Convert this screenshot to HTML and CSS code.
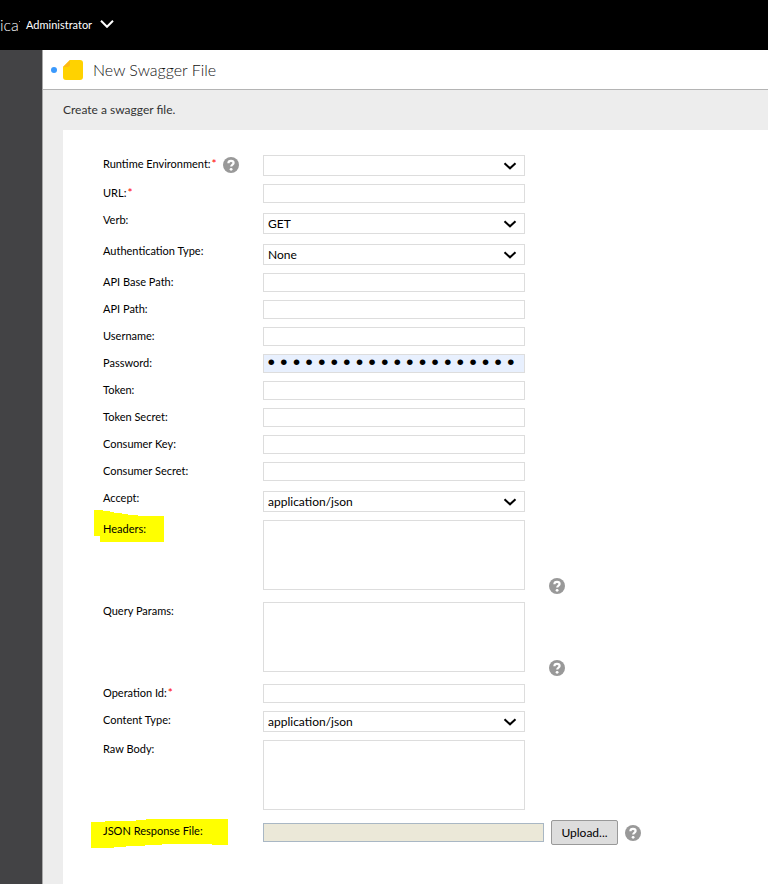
FILE: index.html
```html
<!DOCTYPE html>
<html lang="en">
<head>
<meta charset="utf-8">
<title>New Swagger File</title>
<link rel="stylesheet" href="styles.css">
</head>
<body>
<svg class="defs" aria-hidden="true">
  <symbol id="chevron" viewBox="0 0 14 8"><path d="M1.5 1.2 7 6.3 12.5 1.2" fill="none" stroke="currentColor" stroke-width="2"/></symbol>
  <symbol id="help" viewBox="0 0 16 16"><circle cx="8" cy="8" r="8" fill="#999"/><path d="M5.4 6.2C5.4 4.5 6.5 3.9 8 3.9s2.6.7 2.6 2c0 1.7-2.4 1.6-2.4 3.7" fill="none" stroke="#fff" stroke-width="2.2"/><circle cx="8.1" cy="12.3" r="1.4" fill="#fff"/></symbol>
</svg>
<header class="topbar">
  <span class="brand">ica</span><span class="dot-mark"></span>
  <button class="app-menu" type="button">Administrator <svg class="menu-chevron" viewBox="0 0 14 8"><path d="M1 .8 7 6.8 13 .8" fill="none" stroke="currentColor" stroke-width="2"/></svg></button>
</header>
<div class="shell">
  <nav class="rail" aria-label="Main"></nav>
  <main class="content">
    <div class="title-bar">
      <span class="unsaved"></span>
      <svg class="file-icon" viewBox="0 0 20 20" aria-hidden="true"><path d="M7 0H17a3 3 0 0 1 3 3V17a3 3 0 0 1-3 3H3a3 3 0 0 1-3-3V7Z" fill="#ffd200"/><path d="M7 0V4a3 3 0 0 1-3 3H0Z" fill="#fdb913"/></svg>
      <h1>New Swagger File</h1>
    </div>
    <p class="intro">Create a swagger file.</p>
    <form class="panel">
      <div class="row">
        <div class="label"><label for="runtime">Runtime Environment:<span class="req">*</span></label><svg class="help label-help"><use href="#help"/></svg></div>
        <div class="select"><select id="runtime"><option></option></select><svg class="chevron"><use href="#chevron"/></svg></div>
      </div>
      <div class="row"><div class="label"><label for="url">URL:<span class="req">*</span></label></div><input class="field" id="url" type="text"></div>
      <div class="row">
        <div class="label"><label for="verb">Verb:</label></div>
        <div class="select lowered"><select id="verb"><option>GET</option></select><svg class="chevron"><use href="#chevron"/></svg></div>
      </div>
      <div class="row">
        <div class="label"><label for="auth">Authentication Type:</label></div>
        <div class="select lowered"><select id="auth"><option>None</option></select><svg class="chevron"><use href="#chevron"/></svg></div>
      </div>
      <div class="row"><div class="label"><label for="base">API Base Path:</label></div><input class="field" id="base" type="text"></div>
      <div class="row"><div class="label"><label for="path">API Path:</label></div><input class="field" id="path" type="text"></div>
      <div class="row"><div class="label"><label for="user">Username:</label></div><input class="field" id="user" type="text"></div>
      <div class="row"><div class="label"><label for="pass">Password:</label></div><input class="field filled" id="pass" type="password" value="xxxxxxxxxxxxxxxxxxxx"></div>
      <div class="row"><div class="label"><label for="token">Token:</label></div><input class="field" id="token" type="text"></div>
      <div class="row"><div class="label"><label for="tsecret">Token Secret:</label></div><input class="field" id="tsecret" type="text"></div>
      <div class="row"><div class="label"><label for="ckey">Consumer Key:</label></div><input class="field" id="ckey" type="text"></div>
      <div class="row"><div class="label"><label for="csecret">Consumer Secret:</label></div><input class="field" id="csecret" type="text"></div>
      <div class="row">
        <div class="label"><label for="accept">Accept:</label></div>
        <div class="select lowered"><select id="accept"><option>application/json</option></select><svg class="chevron"><use href="#chevron"/></svg></div>
      </div>
      <div class="row tall">
        <div class="label"><svg class="mark mark-headers" viewBox="0 0 70 32" aria-hidden="true"><path d="M0 0H9V1H16V2H20V3H28V4H34V5H44V6H70V32H6V26H0Z" fill="#ff0"/></svg><label for="headers">Headers:</label></div>
        <textarea id="headers"></textarea><svg class="help area-help"><use href="#help"/></svg>
      </div>
      <div class="row tall">
        <div class="label"><label for="query">Query Params:</label></div>
        <textarea id="query"></textarea><svg class="help area-help"><use href="#help"/></svg>
      </div>
      <div class="row"><div class="label"><label for="opid">Operation Id:<span class="req">*</span></label></div><input class="field" id="opid" type="text"></div>
      <div class="row">
        <div class="label"><label for="ctype">Content Type:</label></div>
        <div class="select"><select id="ctype"><option>application/json</option></select><svg class="chevron"><use href="#chevron"/></svg></div>
      </div>
      <div class="row tall">
        <div class="label"><label for="raw">Raw Body:</label></div>
        <textarea id="raw"></textarea>
      </div>
      <div class="row">
        <div class="label"><svg class="mark mark-file" viewBox="0 0 137 29" aria-hidden="true"><path d="M0 3H14V2H45V1H55V0H137V26H121V25H71V26H54V27H35V28H23V29H0Z" fill="#ff0"/></svg><label for="jsonfile">JSON Response File:</label></div>
        <div class="upload"><input class="file-name" id="jsonfile" type="text" readonly><button class="upload-button" type="button">Upload...</button><svg class="help"><use href="#help"/></svg></div>
      </div>
    </form>
  </main>
</div>
</body>
</html>
```
FILE: styles.css
```css
* { box-sizing: border-box; }
body {
  margin: 0;
  min-height: 100vh;
  display: flex;
  flex-direction: column;
  font: 12px/18px Lato, "Liberation Sans", sans-serif;
  color: #000;
  background: #ededed;
}
.defs { position: absolute; width: 0; height: 0; }
input, select, textarea, button { font: inherit; color: inherit; margin: 0; border-radius: 0; }
.topbar {
  display: flex;
  align-items: center;
  height: 50px;
  background: #000;
  color: #fff;
}
.brand { width: 19px; font-size: 16px; line-height: 20px; font-weight: 300; }
.dot-mark { width: 1px; height: 1px; margin-bottom: 8px; background: #999; }
.app-menu {
  display: flex;
  align-items: center;
  gap: 8px;
  padding: 0 6px;
  border: 0;
  background: none;
  font-size: 11px;
}
.menu-chevron { width: 14px; height: 8px; margin-bottom: 2px; }
.shell { flex: 1; display: flex; }
.rail { width: 43px; flex: none; background: #434345; border-right: 1px solid #a8a8a8; }
.content { flex: 1; min-width: 0; display: flex; flex-direction: column; }
.title-bar {
  display: flex;
  align-items: center;
  height: 40px;
  padding-left: 8px;
  background: #fff;
  border-bottom: 1px solid #b4b4b4;
}
.unsaved { width: 6px; height: 6px; border-radius: 50%; background: #3b99fc; }
.file-icon { width: 20px; height: 20px; margin: 0 10px 0 6px; }
h1 { margin: 0; font-size: 16px; line-height: 20px; font-weight: 300; color: #111; }
.intro { margin: 0; padding: 11px 20px; color: #333; }
.panel { flex: 1; margin-left: 20px; padding: 25px 20px 20px 40px; background: #fff; }
.row { display: flex; align-items: flex-start; margin-bottom: 8px; }
.tall { margin-bottom: 12px; }
.label { position: relative; display: flex; width: 160px; flex: none; font-size: 11px; }
.label label { position: relative; white-space: nowrap; }
.req { margin-left: 1px; font-size: 12px; line-height: 12px; color: #f00; }
.help { width: 16px; height: 16px; flex: none; }
.label-help { position: absolute; left: 120px; top: 2px; }
.field, .select, textarea { width: 262px; border: 1px solid #ddd; background: #fff; }
.field { height: 19px; padding: 0 4px; }
.filled {
  padding: 0 1px;
  background: #e8f0fe;
  font-family: "Liberation Mono", monospace;
  font-size: 21px;
}
.select { position: relative; height: 21px; }
.lowered { margin-top: 2px; }
select {
  display: block;
  width: 100%;
  height: 19px;
  padding: 0 24px 0 4px;
  border: 0;
  background: none;
  appearance: none;
}
.chevron { position: absolute; right: 7px; top: 6px; width: 14px; height: 8px; pointer-events: none; }
textarea { display: block; height: 70px; resize: none; }
.area-help { align-self: flex-end; margin: 0 0 -4px 24px; }
.mark { position: absolute; }
.mark-headers { left: -9px; top: -10px; width: 70px; height: 32px; }
.mark-file { left: -12px; top: -3px; width: 137px; height: 29px; }
.upload { display: flex; align-items: center; gap: 7px; margin-top: -2px; }
.file-name { width: 281px; height: 19px; border: 1px solid #a9b7c4; background: #ebe8d8; }
.upload-button {
  width: 67px;
  height: 25px;
  padding: 0;
  border: 1px solid #999;
  border-radius: 2px;
  background: #ddd;
}
```
